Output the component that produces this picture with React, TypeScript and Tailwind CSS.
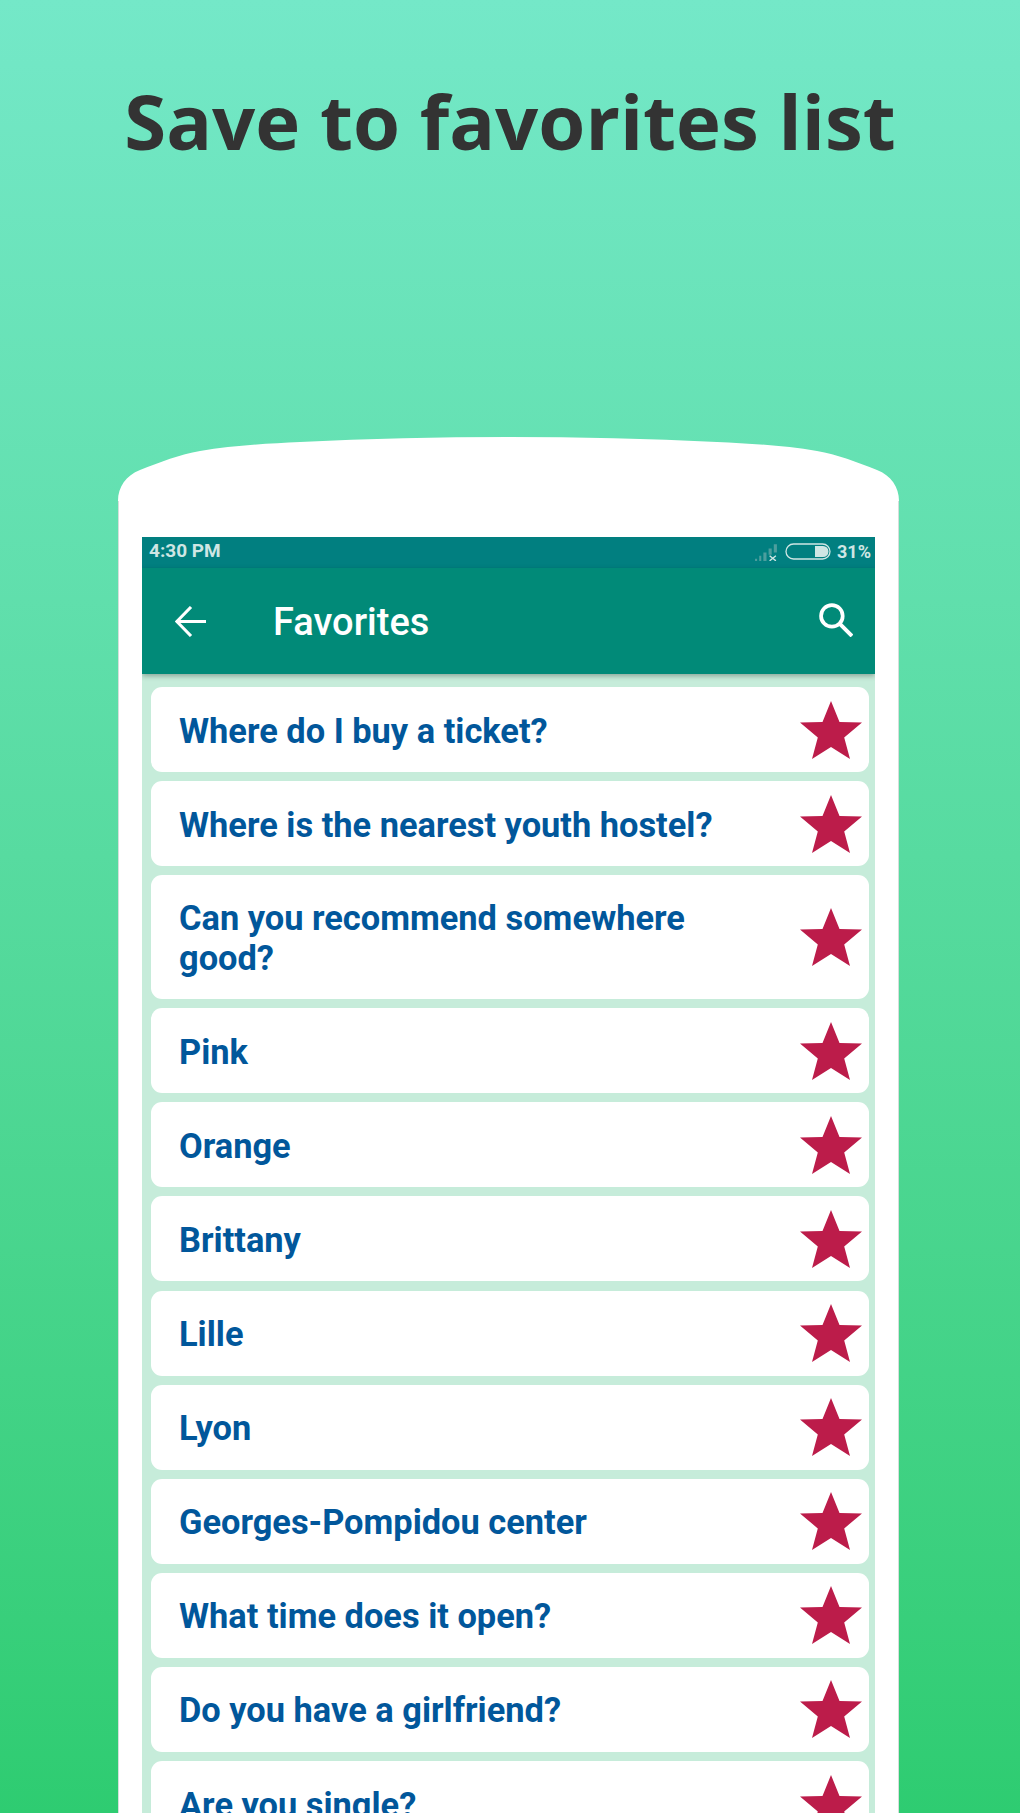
const items = [
  "Where do I buy a ticket?",
  "Where is the nearest youth hostel?",
  "Can you recommend somewhere good?",
  "Pink",
  "Orange",
  "Brittany",
  "Lille",
  "Lyon",
  "Georges-Pompidou center",
  "What time does it open?",
  "Do you have a girlfriend?",
  "Are you single?",
];

function Star() {
  return (
    <svg viewBox="0 0 62 58" className="w-[62px] h-[58px] shrink-0" aria-hidden="true">
      <path d="M31 0 L39.5 21 L62 21.6 L44.2 36.4 L50 58 L31 46 L12 58 L17.8 36.4 L0 21.6 L22.5 21 Z" fill="#bc1c4a" />
    </svg>
  );
}

export default function App() {
  return (
    <div className="w-[1020px] h-[1813px] overflow-hidden bg-gradient-to-b from-[#74e8c8] to-[#2ecc71] flex flex-col items-center">
      <h1 className="mt-[77px] h-[88px] text-[76px] leading-[88px] font-bold text-[#333333] whitespace-nowrap font-['Open_Sans',sans-serif]">
        Save to favorites list
      </h1>
      <div className="mt-[272px] w-[781px] flex-1 min-h-0 flex flex-col self-start ml-[118px]">
        <svg viewBox="0 0 781 64" className="w-[781px] h-[64px] block shrink-0" aria-hidden="true">
          <path
            d="M0 64 C0 50 8 38.5 22 33 C42 25 62 17.5 82 14 C115 8.2 150 6.6 182 5 C250 1.6 320 0 390.5 0 C461 0 531 1.6 599 5 C631 6.6 666 8.2 699 14 C719 17.5 739 25 759 33 C773 38.5 781 50 781 64 Z"
            fill="#ffffff"
          />
        </svg>
        <div className="flex-1 min-h-0 bg-white pt-[36px] pl-[23px] pr-[23px] border-x border-[#d5dedb] overflow-hidden">
          <div className="h-full flex flex-col bg-[#c6ecda] overflow-hidden">
            <div className="h-[31px] shrink-0 bg-[#017f80] flex items-center justify-between pl-[7px] pr-[4px] text-[19px] font-bold text-[#cfe6e4] font-['Roboto',sans-serif]">
              <span className="-mt-[3px]">4:30 PM</span>
              <div className="flex items-center gap-[6px] -mt-[2px]">
                <svg viewBox="0 0 24 18" className="w-[25px] h-[19px]" aria-hidden="true">
                  <path d="M1 16h2v2H1zM5 13h2v5H5zM9 10h3v8H9zM14 6h3v6h-3zM19 2h3v8h-3z" fill="#4d9e9d" />
                  <path d="M15 13l6 5M21 13l-6 5" stroke="#cfe6e4" strokeWidth="1.3" />
                </svg>
                <svg viewBox="0 0 46 17" className="w-[46px] h-[17px]" aria-hidden="true">
                  <rect x="1" y="1" width="44" height="15" rx="7.5" fill="none" stroke="#cfe6e4" strokeWidth="1.3" />
                  <path d="M30 3h8a5.5 5.5 0 0 1 0 11h-8z" fill="#cfe6e4" />
                </svg>
                <span className="text-[18px]">31%</span>
              </div>
            </div>
            <div className="h-[106px] shrink-0 bg-[#018a78] shadow-[0_2px_5px_rgba(0,0,0,0.3)] flex items-center justify-between pl-[33px] pr-[22px] relative">
              <div className="flex items-center gap-[67px]">
                <svg viewBox="0 0 30 30" className="w-[31px] h-[31px]" fill="none" stroke="#ffffff" strokeWidth="3" aria-hidden="true">
                  <path d="M30 15H2M15.5 1L1.8 15l13.7 14" />
                </svg>
                <span className="text-[38px] font-medium text-white font-['Roboto',sans-serif] mt-[2px]">Favorites</span>
              </div>
              <svg viewBox="0 0 33 33" className="w-[34px] h-[34px] -mt-[2px]" fill="none" stroke="#ffffff" aria-hidden="true">
                <circle cx="12.5" cy="12.5" r="10.5" strokeWidth="3.6" />
                <path d="M20 20l12 12" strokeWidth="3.8" />
              </svg>
            </div>
            <div className="flex flex-col gap-[9.1px] pt-[13px] pl-[9px] pr-[6px]">
              {items.map((t) => (
                <div key={t} className="bg-white rounded-[11px] min-h-[85px] shrink-0 flex items-center justify-between pl-[28px] pr-[7px]">
                  <span className="w-[560px] pt-[23px] pb-[21px] text-[34.4px] leading-[40px] font-bold text-[#01579b] font-['Roboto',sans-serif]">{t}</span>
                  <Star />
                </div>
              ))}
            </div>
          </div>
        </div>
      </div>
    </div>
  );
}
